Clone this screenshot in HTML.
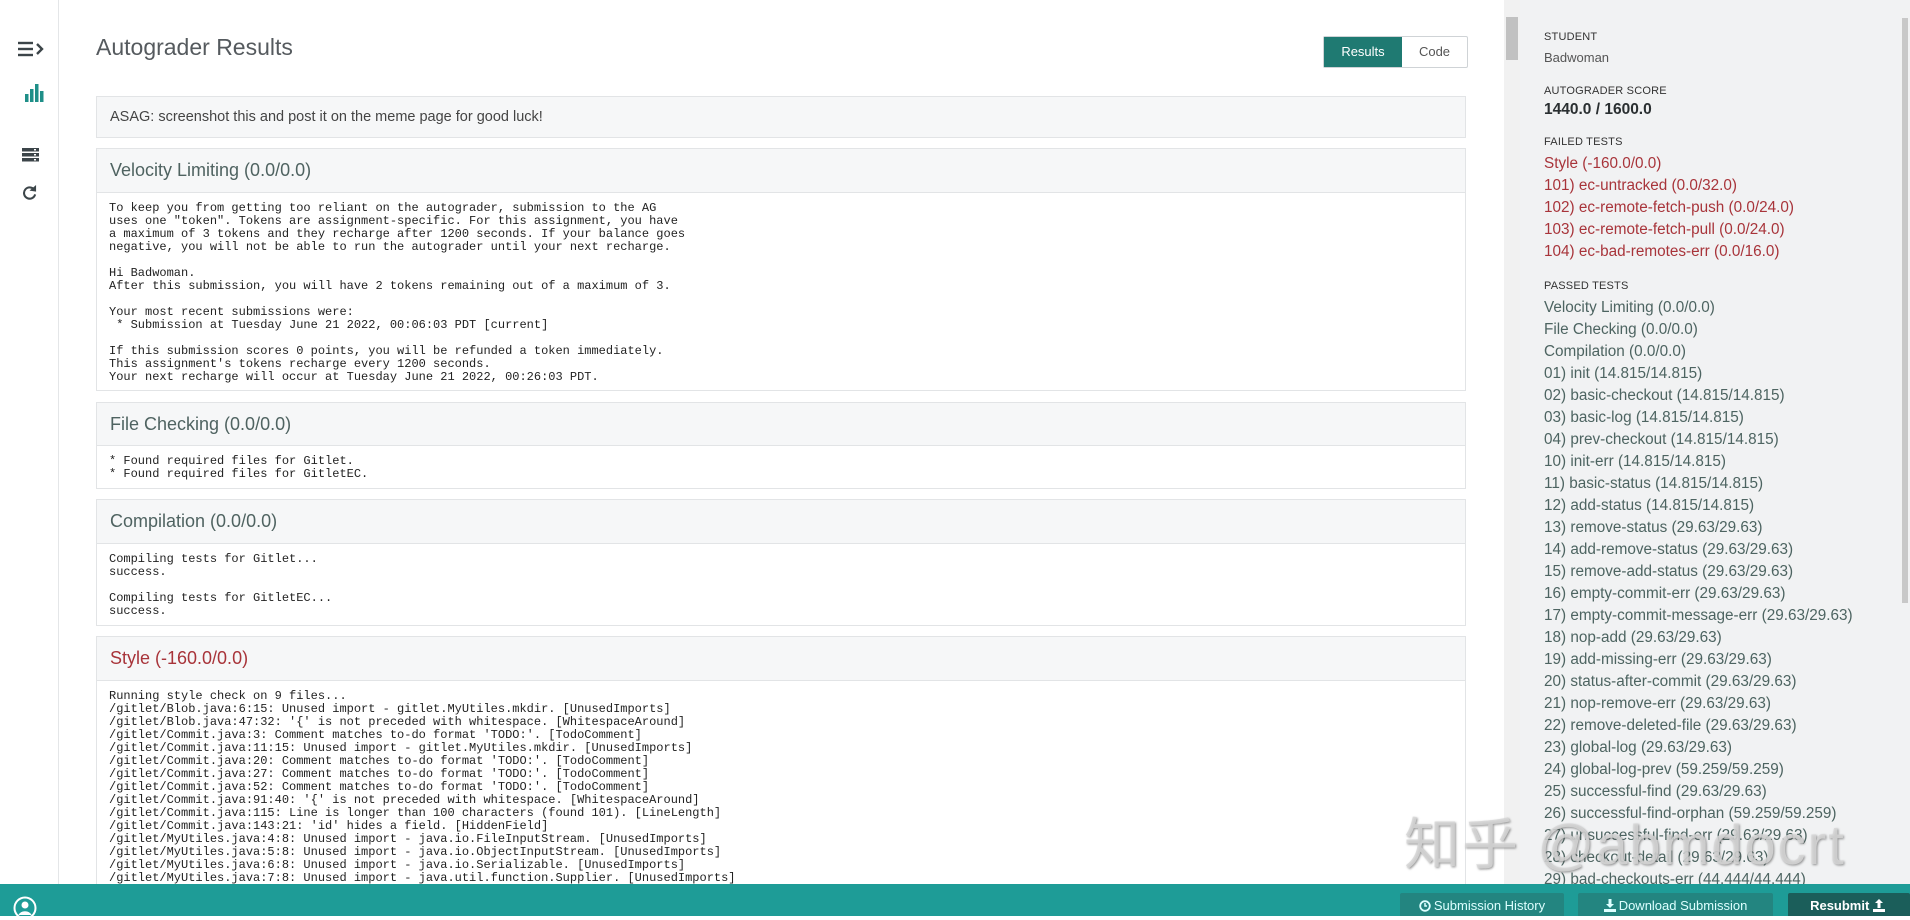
<!DOCTYPE html>
<html><head><meta charset="utf-8">
<style>
*{box-sizing:border-box;margin:0;padding:0}
body{width:1910px;height:916px;overflow:hidden;background:#fff;font-family:"Liberation Sans",sans-serif;position:relative}
.side{position:absolute;left:0;top:0;width:59px;height:884px;border-right:1px solid #e4e6e8;background:#fff}
.main{position:absolute;left:60px;top:0;width:1444px;height:884px;overflow:hidden}
h1{position:absolute;left:36px;top:34px;font-size:23px;font-weight:normal;color:#555a5e}
.tabs{position:absolute;left:1263px;top:36px;height:32px;display:flex;border:1px solid #cfd3d6;border-radius:2px;font-size:13px}
.tabs div{line-height:30px;padding:0 16px}
.tabs .on{background:#1f7a72;color:#fff;width:78px;text-align:center;padding:0}
.tabs .off{color:#555;width:65px;text-align:center;padding:0}
.box{position:absolute;left:36px;width:1370px;border:1px solid #e2e4e6;background:#fff}
.hd{background:#f6f7f8;border-bottom:1px solid #e2e4e6;padding:0 13px;font-size:18px;color:#4f6361;display:flex;align-items:center}
pre{font-family:"Liberation Mono",monospace;font-size:12px;line-height:13px;color:#222;padding:9px 12px}
.scr{position:absolute;left:1504px;top:0;width:16px;height:884px;background:#f1f1f1}
.scr .th{position:absolute;left:2px;top:17px;width:12px;height:43px;background:#c1c1c1}
.right{position:absolute;left:1520px;top:0;width:390px;height:884px;background:#f1f2f3;overflow:hidden}
.lbl{position:absolute;left:24px;font-size:11px;color:#333;letter-spacing:.2px}
.val{position:absolute;left:24px;font-size:13px;color:#555}
.list{position:absolute;left:24px;font-size:15.3px;line-height:22px}
.fail{color:#a8343a}
.pass{color:#4d6461}
.bar{position:absolute;left:0;top:884px;width:1910px;height:32px;background:#1e9c97}
.btn{position:absolute;top:9px;height:23px;background:#238580;color:#dff;font-size:13px;line-height:25px;text-align:center;border-radius:2px 2px 0 0}
.btn svg{vertical-align:-2px;margin-right:3px}
.wm{position:absolute;left:1404px;top:800px;font-size:56px;color:rgba(215,215,215,.85);font-family:"Liberation Sans","Noto Sans CJK SC",sans-serif;text-shadow:1px 1px 2px rgba(80,80,80,.6);white-space:nowrap;letter-spacing:2px}
</style></head><body>
<div class="side">
<svg style="position:absolute;left:18px;top:41px" width="27" height="16" viewBox="0 0 27 16"><g stroke="#3c4549" stroke-width="2.4"><line x1="0" y1="2" x2="15" y2="2"/><line x1="0" y1="8" x2="15" y2="8"/><line x1="0" y1="14" x2="15" y2="14"/><polyline points="19,3 24,8 19,13" fill="none"/></g></svg>
<svg style="position:absolute;left:25px;top:84px" width="19" height="18" viewBox="0 0 19 18"><g fill="#1f8f88"><rect x="0" y="10" width="3.5" height="8"/><rect x="5" y="5" width="3.5" height="13"/><rect x="10" y="0" width="3.5" height="18"/><rect x="15" y="7" width="3.5" height="11"/></g></svg>
<svg style="position:absolute;left:22px;top:148px" width="17" height="14" viewBox="0 0 17 14"><g fill="#3c4549"><rect x="0" y="0" width="17" height="3.5"/><rect x="0" y="5" width="17" height="3.5"/><rect x="0" y="10" width="17" height="3.5"/></g><g fill="#fff"><rect x="12" y="1" width="2" height="1.5"/><rect x="12" y="6" width="2" height="1.5"/><rect x="12" y="11" width="2" height="1.5"/></g></svg>
<svg style="position:absolute;left:22px;top:185px" width="15" height="15" viewBox="0 0 16 16"><path d="M13 5A6 6 0 1 0 14 10" fill="none" stroke="#3c4549" stroke-width="2.2"/><polygon points="15,0 15,7 8,6" fill="#3c4549"/></svg>
</div>
<div class="main">
<h1>Autograder Results</h1>
<div class="tabs"><div class="on">Results</div><div class="off">Code</div></div>
<div class="box" style="top:96px;height:42px;background:#f6f7f8"><div style="padding:12px 13px;font-size:14.5px;color:#444">ASAG: screenshot this and post it on the meme page for good luck!</div></div>
<div class="box" style="top:148px;height:243px"><div class="hd" style="height:44px">Velocity Limiting (0.0/0.0)</div><pre>To keep you from getting too reliant on the autograder, submission to the AG
uses one "token". Tokens are assignment-specific. For this assignment, you have
a maximum of 3 tokens and they recharge after 1200 seconds. If your balance goes
negative, you will not be able to run the autograder until your next recharge.

Hi Badwoman.
After this submission, you will have 2 tokens remaining out of a maximum of 3.

Your most recent submissions were:
 * Submission at Tuesday June 21 2022, 00:06:03 PDT [current]

If this submission scores 0 points, you will be refunded a token immediately.
This assignment's tokens recharge every 1200 seconds.
Your next recharge will occur at Tuesday June 21 2022, 00:26:03 PDT.</pre></div>
<div class="box" style="top:402px;height:87px"><div class="hd" style="height:43px">File Checking (0.0/0.0)</div><pre>* Found required files for Gitlet.
* Found required files for GitletEC.</pre></div>
<div class="box" style="top:499px;height:127px"><div class="hd" style="height:44px">Compilation (0.0/0.0)</div><pre>Compiling tests for Gitlet...
success.

Compiling tests for GitletEC...
success.</pre></div>
<div class="box" style="top:636px;height:300px"><div class="hd" style="height:44px;color:#a8343a">Style (-160.0/0.0)</div><pre>Running style check on 9 files...
/gitlet/Blob.java:6:15: Unused import - gitlet.MyUtiles.mkdir. [UnusedImports]
/gitlet/Blob.java:47:32: '{' is not preceded with whitespace. [WhitespaceAround]
/gitlet/Commit.java:3: Comment matches to-do format 'TODO:'. [TodoComment]
/gitlet/Commit.java:11:15: Unused import - gitlet.MyUtiles.mkdir. [UnusedImports]
/gitlet/Commit.java:20: Comment matches to-do format 'TODO:'. [TodoComment]
/gitlet/Commit.java:27: Comment matches to-do format 'TODO:'. [TodoComment]
/gitlet/Commit.java:52: Comment matches to-do format 'TODO:'. [TodoComment]
/gitlet/Commit.java:91:40: '{' is not preceded with whitespace. [WhitespaceAround]
/gitlet/Commit.java:115: Line is longer than 100 characters (found 101). [LineLength]
/gitlet/Commit.java:143:21: 'id' hides a field. [HiddenField]
/gitlet/MyUtiles.java:4:8: Unused import - java.io.FileInputStream. [UnusedImports]
/gitlet/MyUtiles.java:5:8: Unused import - java.io.ObjectInputStream. [UnusedImports]
/gitlet/MyUtiles.java:6:8: Unused import - java.io.Serializable. [UnusedImports]
/gitlet/MyUtiles.java:7:8: Unused import - java.util.function.Supplier. [UnusedImports]</pre></div>
</div>
<div class="scr"><div class="th"></div></div>
<div class="right">
<div class="lbl" style="top:31px">STUDENT</div>
<div class="val" style="top:50px">Badwoman</div>
<div class="lbl" style="top:85px">AUTOGRADER SCORE</div>
<div style="position:absolute;left:24px;top:101px;font-size:15.5px;font-weight:bold;color:#2a2f31">1440.0 / 1600.0</div>
<div class="lbl" style="top:136px">FAILED TESTS</div>
<div class="list fail" style="top:153px">Style (-160.0/0.0)<br>101) ec-untracked (0.0/32.0)<br>102) ec-remote-fetch-push (0.0/24.0)<br>103) ec-remote-fetch-pull (0.0/24.0)<br>104) ec-bad-remotes-err (0.0/16.0)</div>
<div class="lbl" style="top:280px">PASSED TESTS</div>
<div class="list pass" style="top:297px">Velocity Limiting (0.0/0.0)<br>File Checking (0.0/0.0)<br>Compilation (0.0/0.0)<br>01) init (14.815/14.815)<br>02) basic-checkout (14.815/14.815)<br>03) basic-log (14.815/14.815)<br>04) prev-checkout (14.815/14.815)<br>10) init-err (14.815/14.815)<br>11) basic-status (14.815/14.815)<br>12) add-status (14.815/14.815)<br>13) remove-status (29.63/29.63)<br>14) add-remove-status (29.63/29.63)<br>15) remove-add-status (29.63/29.63)<br>16) empty-commit-err (29.63/29.63)<br>17) empty-commit-message-err (29.63/29.63)<br>18) nop-add (29.63/29.63)<br>19) add-missing-err (29.63/29.63)<br>20) status-after-commit (29.63/29.63)<br>21) nop-remove-err (29.63/29.63)<br>22) remove-deleted-file (29.63/29.63)<br>23) global-log (29.63/29.63)<br>24) global-log-prev (59.259/59.259)<br>25) successful-find (29.63/29.63)<br>26) successful-find-orphan (59.259/59.259)<br>27) unsuccessful-find-err (29.63/29.63)<br>28) checkout-detail (29.63/29.63)<br>29) bad-checkouts-err (44.444/44.444)</div>
<div style="position:absolute;left:382px;top:18px;width:6px;height:585px;background:#c8c8c8"></div>
</div>
<div class="wm">知乎 @abmdocrt</div>
<div class="bar">
<svg style="position:absolute;left:13px;top:12px" width="24" height="24" viewBox="0 0 24 24"><circle cx="12" cy="12" r="10.5" fill="none" stroke="#fff" stroke-width="2"/><circle cx="12" cy="9" r="3.5" fill="#fff"/><path d="M5.5 19a7 6 0 0 1 13 0z" fill="#fff"/></svg>
<div class="btn" style="left:1400px;width:164px"><svg width="12" height="12" viewBox="0 0 12 12"><circle cx="6" cy="6" r="4.8" fill="none" stroke="#dff" stroke-width="1.8"/><path d="M6 3v3h2" fill="none" stroke="#dff" stroke-width="1.5"/></svg>Submission History</div>
<div class="btn" style="left:1578px;width:195px"><svg width="12" height="13" viewBox="0 0 12 13"><path d="M4.5 0h3v5h2.5L6 9 2 5h2.5z" fill="#dff"/><rect x="0" y="10" width="12" height="3" fill="#dff"/></svg>Download Submission</div>
<div class="btn" style="left:1788px;width:122px;background:#1b5e5a;color:#fff;font-weight:bold">Resubmit <svg width="12" height="13" viewBox="0 0 12 13"><path d="M4.5 9h3V4h2.5L6 0 2 4h2.5z" fill="#fff"/><rect x="0" y="10" width="12" height="3" fill="#fff"/></svg></div>
</div>
</body></html>
